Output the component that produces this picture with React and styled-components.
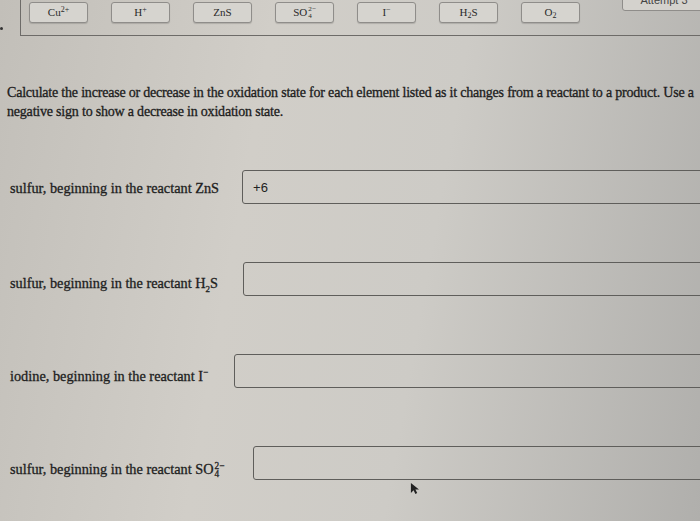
import React from 'react';
import styled, { createGlobalStyle } from 'styled-components';

const GlobalStyle = createGlobalStyle`
  html, body {
    margin: 0;
    padding: 0;
    overflow: hidden;
  }
  body {
    width: 700px;
    height: 521px;
    background: linear-gradient(100deg, #c2bfb9 0%, #d1cec8 35%, #cdcbc6 60%, #b0afac 100%);
    font-family: "Liberation Serif", "Times New Roman", serif;
    color: #1e1e1e;
  }
`;

function Chem({ children }) {
  return <Stack>{children}</Stack>;
}

const species = [
  { key: 'cu', node: <>Cu<sup>2+</sup></> },
  { key: 'h', node: <>H<sup>+</sup></> },
  { key: 'zns', node: <>ZnS</> },
  { key: 'so4', node: <>SO<Chem><span>2−</span><span>4</span></Chem></> },
  { key: 'i', node: <>I<sup>−</sup></> },
  { key: 'h2s', node: <>H<sub>2</sub>S</> },
  { key: 'o2', node: <>O<sub>2</sub></> },
];

const questions = [
  { key: 'zns', gap: 23, drop: 1, value: '+6', label: <>sulfur, beginning in the reactant ZnS</> },
  { key: 'h2s', gap: 25, drop: 5, value: '', label: <>sulfur, beginning in the reactant H<sub>2</sub>S</> },
  { key: 'i', gap: 26, drop: 5, value: '', label: <>iodine, beginning in the reactant I<sup>−</sup></> },
  {
    key: 'so4',
    gap: 29,
    drop: 7,
    value: '',
    label: <>sulfur, beginning in the reactant SO<Chem><span>2−</span><span>4</span></Chem></>,
  },
];

export default function App() {
  return (
    <>
      <GlobalStyle />
      <Page>
        <Dot />
        <Tray>
          {species.map((s) => (
            <Tile key={s.key}>{s.node}</Tile>
          ))}
        </Tray>
        <AttemptTab>Attempt 3</AttemptTab>

        <Prompt>
          Calculate the increase or decrease in the oxidation state for each element listed as it changes from a
          reactant to a product. Use a negative sign to show a decrease in oxidation state.
        </Prompt>

        <Questions>
          {questions.map((q) => (
            <Row key={q.key} $gap={q.gap}>
              <Label $drop={q.drop}>{q.label}</Label>
              <Answer defaultValue={q.value} />
            </Row>
          ))}
        </Questions>

        <Pointer viewBox="0 0 10 14">
          <path d="M1 1 L1 12 L4 9 L6 13 L8 12 L6 8 L10 8 Z" fill="#222" />
        </Pointer>
      </Page>
    </>
  );
}

const Page = styled.div`
  position: relative;
  width: 700px;
  height: 521px;
  overflow: hidden;
`;

const Dot = styled.span`
  position: absolute;
  left: 0;
  top: 27px;
  width: 3px;
  height: 3px;
  border-radius: 50%;
  background: #333;
`;

const Tray = styled.div`
  margin-left: 20px;
  height: 36px;
  border-left: 1px solid #6d6b68;
  border-bottom: 1px solid #6d6b68;
  display: flex;
  align-items: flex-start;
  gap: 23px;
  padding: 2px 0 0 8px;
  box-sizing: border-box;
`;

const Tile = styled.div`
  width: 59px;
  height: 21px;
  box-sizing: border-box;
  border: 1px solid #8f8d8a;
  border-radius: 3px;
  background: #d6d4cf;
  box-shadow: 0 1px 1px rgba(0, 0, 0, 0.15);
  display: flex;
  align-items: center;
  justify-content: center;
  font-size: 11px;
  color: #2a2a2a;
  line-height: 1;

  & > sup {
    font-size: 8px;
    position: relative;
    top: -3px;
    vertical-align: baseline;
  }
  & > sub {
    font-size: 8px;
    position: relative;
    top: 3px;
    vertical-align: baseline;
  }
`;

const Stack = styled.span`
  display: inline-flex;
  flex-direction: column;
  vertical-align: middle;
  font-size: 0.65em;
  line-height: 0.95;
  margin-left: 1px;
`;

const AttemptTab = styled.div`
  position: absolute;
  right: -6px;
  top: -8px;
  width: 82px;
  height: 17px;
  border: 1px solid #8f8d8a;
  border-radius: 3px;
  background: #d4d2cd;
  font-family: "Liberation Sans", Arial, sans-serif;
  font-size: 11px;
  text-align: center;
  line-height: 15px;
  color: #444;
`;

const Prompt = styled.p`
  margin: 47px 0 0 7px;
  width: 720px;
  font-size: 14px;
  letter-spacing: -0.2px;
  line-height: 19px;
  color: #1c1c1c;
  -webkit-text-stroke: 0.3px #1c1c1c;
`;

const Questions = styled.div`
  margin-top: 49px;
  display: flex;
  flex-direction: column;
  gap: 58px;
`;

const Row = styled.div`
  display: flex;
  align-items: center;
  gap: ${(p) => p.$gap}px;
  padding-left: 10px;
`;

const Label = styled.span`
  position: relative;
  top: ${(p) => p.$drop}px;
  font-size: 14.3px;
  white-space: nowrap;
  color: #1e1e1e;
  -webkit-text-stroke: 0.3px #1e1e1e;

  & > sup, & > sub {
    font-size: 9px;
  }
`;

const Answer = styled.input`
  flex: 1;
  height: 34px;
  margin-right: -20px;
  box-sizing: border-box;
  border: 1px solid #5f5e5b;
  border-radius: 3px;
  background: transparent;
  padding: 0 10px;
  font-family: "Liberation Sans", Arial, sans-serif;
  font-size: 13px;
  color: #222;
  outline: none;
`;

const Pointer = styled.svg`
  position: absolute;
  left: 410px;
  top: 482px;
  width: 9px;
  height: 13px;
`;
